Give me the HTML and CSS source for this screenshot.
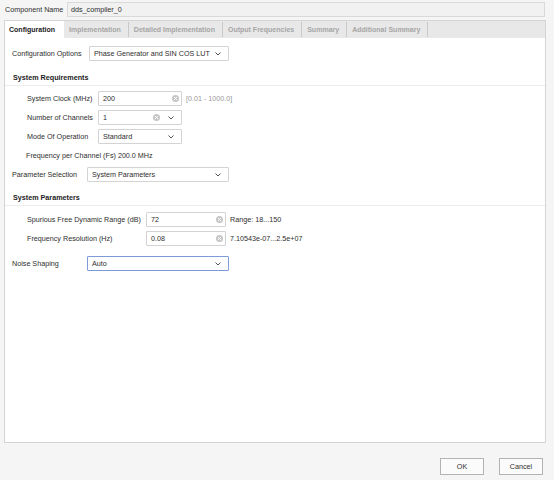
FILE: index.html
```html
<!DOCTYPE html>
<html>
<head>
<meta charset="utf-8">
<link rel="stylesheet" href="styles.css">
</head>
<body>
<div class="header">
  <span class="hlabel">Component Name</span>
  <div class="hinput">dds_compiler_0</div>
</div>
<div class="panel">
  <div class="tabs">
    <div class="tab active">Configuration</div>
    <div class="tab">Implementation</div>
    <div class="tab">Detailed Implementation</div>
    <div class="tab">Output Frequencies</div>
    <div class="tab">Summary</div>
    <div class="tab">Additional Summary</div>
  </div>
  <div class="content">
    <div class="row r-config">
      <span class="label w77">Configuration Options</span>
      <div class="field dd w140"><span class="val">Phase Generator and SIN COS LUT</span><svg class="chev" width="6" height="4" viewBox="0 0 6 4"><polyline points="0.5,0.5 3,3 5.5,0.5" fill="none" stroke="#555" stroke-width="1"/></svg></div>
    </div>
    <div class="heading h1">System Requirements</div>
    <div class="row ind r-first">
      <span class="label w71">System Clock (MHz)</span>
      <div class="field w83"><span class="val">200</span><svg class="clr" width="7" height="7" viewBox="0 0 7 7"><circle cx="3.5" cy="3.5" r="3.5" fill="#c6c6c6"/><path d="M2 2 L5 5 M5 2 L2 5" stroke="#fff" stroke-width="1"/></svg></div>
      <span class="hint gray">[0.01 - 1000.0]</span>
    </div>
    <div class="row ind">
      <span class="label w71">Number of Channels</span>
      <div class="field dd w83"><span class="val">1</span><svg class="clr c2" width="7" height="7" viewBox="0 0 7 7"><circle cx="3.5" cy="3.5" r="3.5" fill="#c6c6c6"/><path d="M2 2 L5 5 M5 2 L2 5" stroke="#fff" stroke-width="1"/></svg><svg class="chev" width="6" height="4" viewBox="0 0 6 4"><polyline points="0.5,0.5 3,3 5.5,0.5" fill="none" stroke="#555" stroke-width="1"/></svg></div>
    </div>
    <div class="row ind">
      <span class="label w71">Mode Of Operation</span>
      <div class="field dd w83"><span class="val">Standard</span><svg class="chev" width="6" height="4" viewBox="0 0 6 4"><polyline points="0.5,0.5 3,3 5.5,0.5" fill="none" stroke="#555" stroke-width="1"/></svg></div>
    </div>
    <div class="row ind2">
      <span class="label">Frequency per Channel (Fs) 200.0 MHz</span>
    </div>
    <div class="row">
      <span class="label w75">Parameter Selection</span>
      <div class="field dd w142"><span class="val">System Parameters</span><svg class="chev" width="6" height="4" viewBox="0 0 6 4"><polyline points="0.5,0.5 3,3 5.5,0.5" fill="none" stroke="#555" stroke-width="1"/></svg></div>
    </div>
    <div class="heading h2">System Parameters</div>
    <div class="row ind r-first2">
      <span class="label w119">Spurious Free Dynamic Range (dB)</span>
      <div class="field w80"><span class="val">72</span><svg class="clr" width="7" height="7" viewBox="0 0 7 7"><circle cx="3.5" cy="3.5" r="3.5" fill="#c6c6c6"/><path d="M2 2 L5 5 M5 2 L2 5" stroke="#fff" stroke-width="1"/></svg></div>
      <span class="hint">Range: 18...150</span>
    </div>
    <div class="row ind">
      <span class="label w119">Frequency Resolution (Hz)</span>
      <div class="field w80"><span class="val">0.08</span><svg class="clr" width="7" height="7" viewBox="0 0 7 7"><circle cx="3.5" cy="3.5" r="3.5" fill="#c6c6c6"/><path d="M2 2 L5 5 M5 2 L2 5" stroke="#fff" stroke-width="1"/></svg></div>
      <span class="hint">7.10543e-07...2.5e+07</span>
    </div>
    <div class="row r-noise">
      <span class="label w75">Noise Shaping</span>
      <div class="field dd w142 focus"><span class="val">Auto</span><svg class="chev" width="6" height="4" viewBox="0 0 6 4"><polyline points="0.5,0.5 3,3 5.5,0.5" fill="none" stroke="#555" stroke-width="1"/></svg></div>
    </div>
  </div>
</div>
<div class="buttons">
  <div class="btn">OK</div>
  <div class="btn">Cancel</div>
</div>
</body>
</html>
```
FILE: styles.css
```css
html, body {
  margin: 0;
  padding: 0;
}
body {
  width: 554px;
  height: 480px;
  background: #f5f5f5;
  font-family: "Liberation Sans", Arial, sans-serif;
  font-size: 7.2px;
  color: #2e2e2e;
  overflow: hidden;
}
.header {
  display: flex;
  align-items: center;
  height: 15px;
  padding: 2px 9px 0 5px;
}
.hlabel {
  width: 62px;
  flex: none;
}
.hinput {
  flex: 1;
  height: 13px;
  line-height: 13px;
  border: 1px solid #d9d9d9;
  background: #f1f1f1;
  padding-left: 3px;
}
.panel {
  margin: 3px 8px 0 4px;
  height: 421px;
  border: 1px solid #d4d4d4;
  display: flex;
  flex-direction: column;
  background: #fff;
}
.tabs {
  display: flex;
  height: 17px;
  background: #e8e8e8;
  flex: none;
  align-items: stretch;
}
.tab {
  font-weight: bold;
  font-size: 7.02px;
  color: #a6a6a6;
  line-height: 17px;
  padding: 0 8px 0 4px;
  position: relative;
}
.tab + .tab {
  padding-left: 5px;
}
.tab::after {
  content: "";
  position: absolute;
  right: 0;
  top: 1px;
  bottom: 1px;
  width: 1px;
  background: #c9c9c9;
}
.tab.active {
  background: #fff;
  color: #222;
  padding-right: 9px;
}
.tab.active::after {
  display: none;
}
.content {
  flex: 1;
  background: #fff;
  display: flex;
  flex-direction: column;
  padding-left: 7px;
}
.row {
  display: flex;
  align-items: center;
  height: 15px;
  margin-top: 4px;
  flex: none;
}
.r-config { margin-top: 8px; }
.r-first { margin-top: 5px; }
.r-first2 { margin-top: 6px; }
.r-noise { margin-top: 10px; }
.ind { padding-left: 15px; }
.ind2 { padding-left: 14px; }
.label { flex: none; white-space: nowrap; }
.w71 { width: 71px; }
.w75 { width: 75px; }
.w77 { width: 77px; }
.w119 { width: 119px; }
.heading {
  font-weight: bold;
  color: #222;
  line-height: 10px;
  padding: 0 0 2px 8px;
  margin-left: -7px;
  border-bottom: 1px solid #ececec;
  flex: none;
}
.h1 { margin-top: 12px; }
.h2 { margin-top: 11px; }
.field {
  position: relative;
  height: 15px;
  box-sizing: border-box;
  border: 1px solid #d3d3d3;
  border-radius: 1px;
  background: #fff;
  display: flex;
  align-items: center;
  padding-left: 4px;
  flex: none;
}
.field.focus {
  border-color: #7d9bd6;
}
.w83 { width: 84px; }
.w80 { width: 80px; }
.w140 { width: 140px; }
.w142 { width: 142px; }
.val {
  flex: 1;
  white-space: nowrap;
}
.chev {
  margin-right: 7px;
  flex: none;
}
.clr {
  margin-right: 2px;
  flex: none;
}
.clr.c2 {
  margin-right: 8px;
}
.hint {
  margin-left: 4px;
  white-space: nowrap;
}
.gray { color: #9a9a9a; }
.buttons {
  display: flex;
  justify-content: flex-end;
  gap: 15px;
  padding: 15px 11px 0 0;
}
.btn {
  width: 44px;
  height: 17px;
  box-sizing: border-box;
  border: 1px solid #b3b3b3;
  background: #fbfbfb;
  text-align: center;
  line-height: 15px;
}
```
